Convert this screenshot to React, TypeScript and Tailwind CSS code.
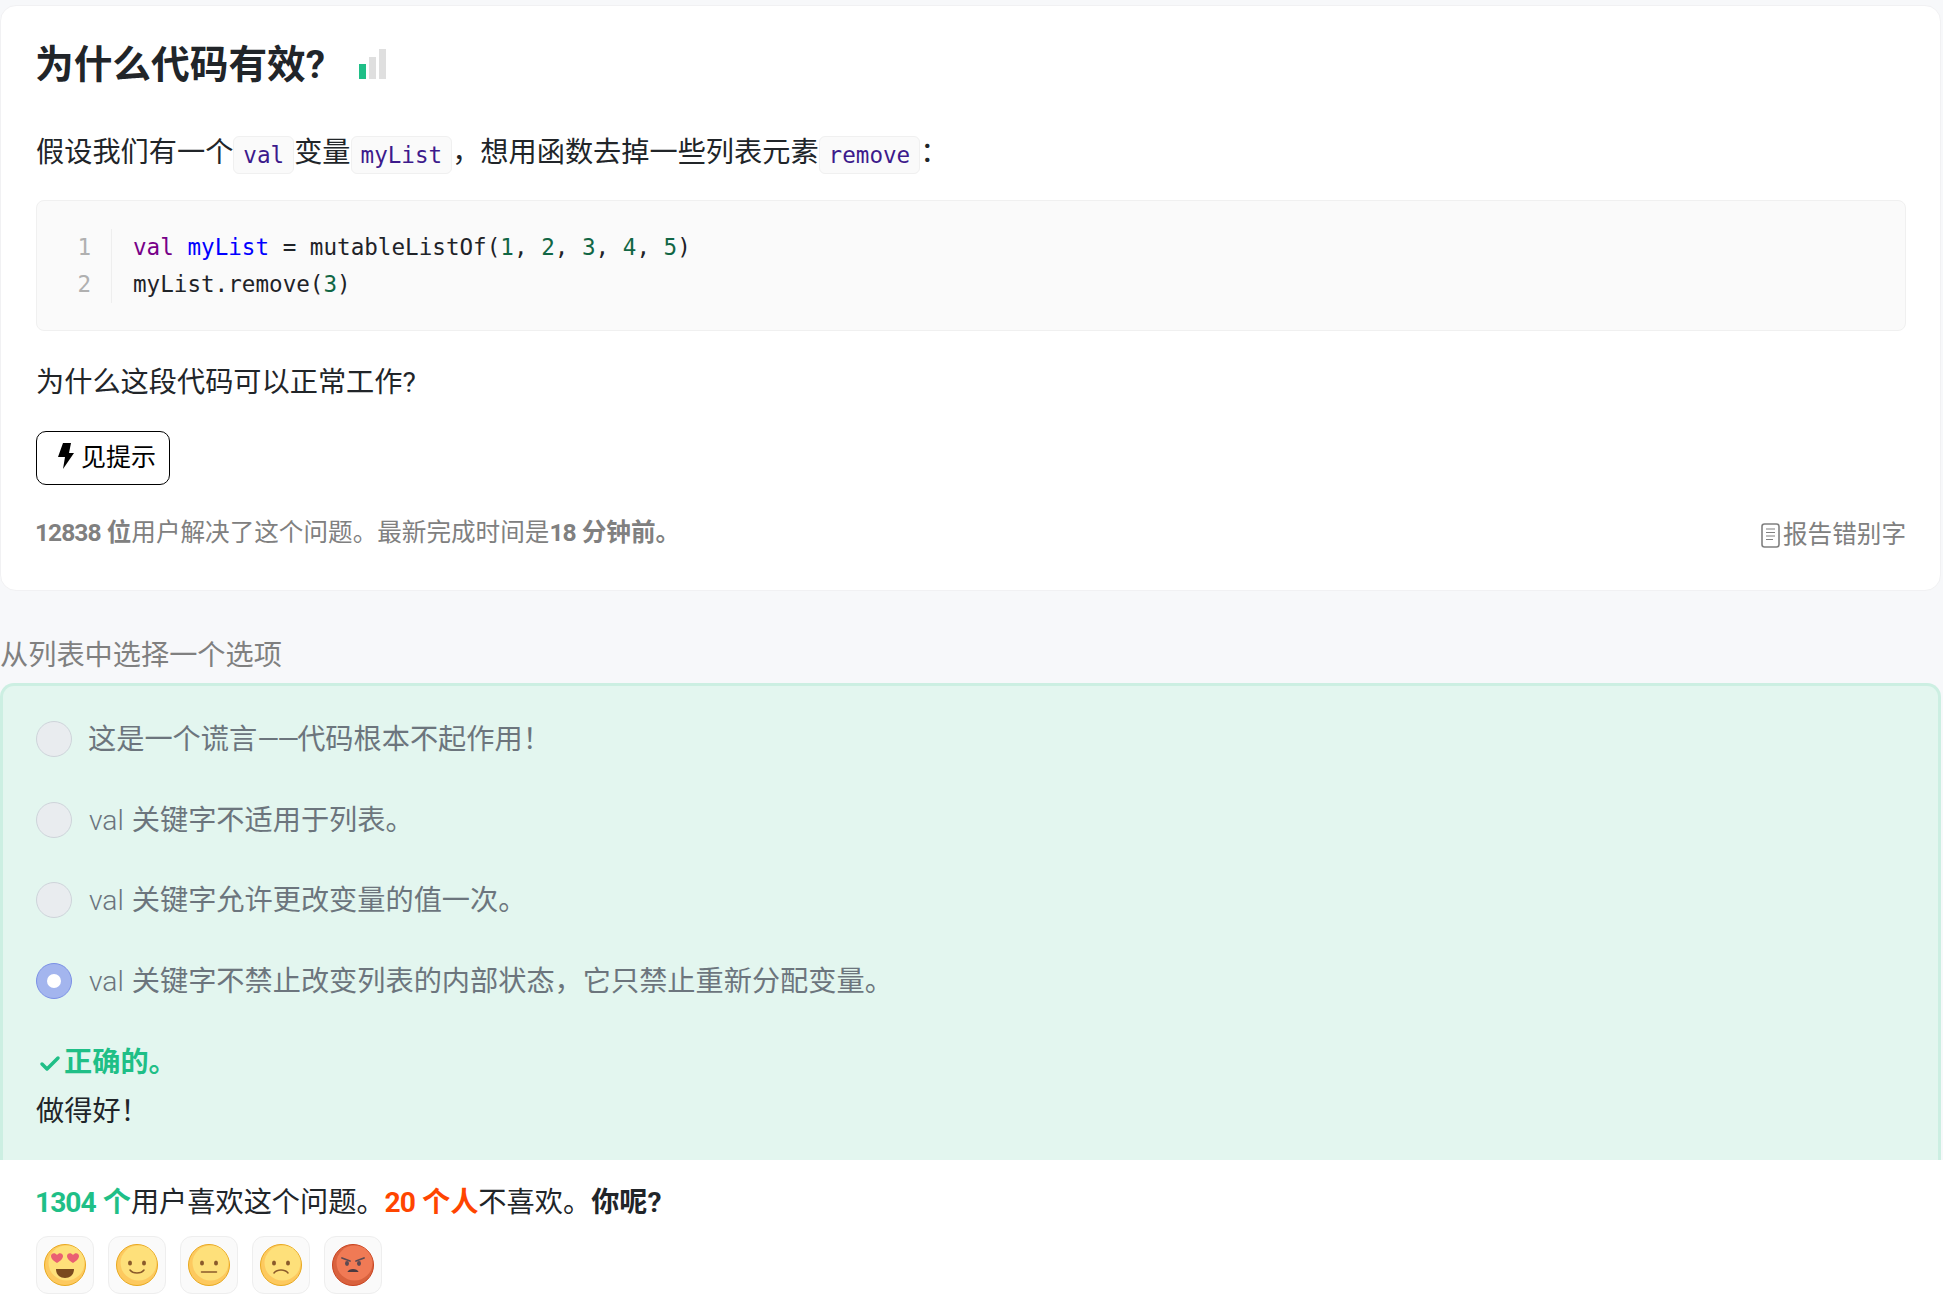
import { Check } from "lucide-react";

const sans = "font-['Roboto','Noto_Sans_CJK_SC',sans-serif]";
const mono = "font-['DejaVu_Sans_Mono','Noto_Sans_CJK_SC',monospace]";

const Code = ({ children }: { children: string }) => (
  <code className={`${mono} text-[22.6px] leading-[36px] text-[#3d1a8c] bg-[#fafafa] border border-[#f0f0f0] rounded-[6px] px-[9px] inline-block h-[38px] align-middle`}>
    {children}
  </code>
);

const Bars = () => (
  <svg width="29" height="30" viewBox="0 0 29 30" className="-mt-[2px]">
    <rect x="0" y="15" width="7" height="15" fill="#1fbf87" />
    <rect x="10" y="8" width="7" height="22" fill="#dfdfdf" />
    <rect x="20" y="0" width="7" height="30" fill="#dfdfdf" />
  </svg>
);

const Bolt = () => (
  <svg width="16" height="26" viewBox="0 0 16 26" fill="#000" className="-mt-[4px]">
    <path d="M5 0h8l-2 10h5L5 26l2-12H0z" />
  </svg>
);

const DocIcon = () => (
  <svg width="19" height="25" viewBox="0 0 19 25" fill="none" stroke="#808080" className="mr-[3px]">
    <rect x="1" y="1" width="17" height="23" rx="2.5" strokeWidth="1.6" />
    <path d="M5 6h9M5 9.5h9M5 13h9M5 16.5h7" strokeWidth="1.2" />
  </svg>
);

const Option = ({ children, val, selected }: { children: React.ReactNode; val?: boolean; selected?: boolean }) => (
  <div className="flex items-center h-[36px] gap-4">
    {selected ? (
      <span className="w-[36px] h-[36px] rounded-full bg-[#a3b5ee] border border-[#7b90e6] flex items-center justify-center">
        <span className="w-[14px] h-[14px] rounded-full bg-white" />
      </span>
    ) : (
      <span className="w-[36px] h-[36px] rounded-full bg-[#e9ecef] border border-[#ced4da]" />
    )}
    <span className="text-[28.2px] leading-[36px] text-[#6c757d] pt-[2px]">
      {val && <span className="font-light ml-[1px] mr-[8px]">val</span>}
      {children}
    </span>
  </div>
);

const Face = ({ mood }: { mood: "love" | "smile" | "flat" | "sad" | "angry" }) => {
  const angry = mood === "angry";
  const eye = "#8a5a2b";
  return (
    <div className="w-[58px] h-[58px] rounded-[12px] bg-[#fafafa] border border-[#eeeeee] flex items-center justify-center">
      <svg width="42" height="42" viewBox="0 0 42 42">
        <circle cx="21" cy="21" r="20.5" fill={angry ? "#d9623e" : "#fdc95f"} stroke={angry ? "#c9431f" : "#e8a91f"} strokeWidth="1" />
        <ellipse cx="22.5" cy="19" rx="18" ry="17.5" fill={angry ? "#f07a55" : "#fee07a"} />
        {mood === "love" && (
          <>
            <path d="M13 19c-3-2-6-4-6-7 0-3 4-4 6-1 2-3 6-2 6 1 0 3-3 5-6 7z" fill="#ea5f72" />
            <path d="M29 19c-3-2-6-4-6-7 0-3 4-4 6-1 2-3 6-2 6 1 0 3-3 5-6 7z" fill="#ea5f72" />
            <path d="M12 25h18c0 6-4 9-9 9s-9-3-9-9z" fill="#7a4a1e" />
          </>
        )}
        {(mood === "smile" || mood === "flat" || mood === "sad") && (
          <>
            <ellipse cx="14" cy="19" rx="2" ry="2.6" fill={eye} />
            <ellipse cx="28" cy="19" rx="2" ry="2.6" fill={eye} />
          </>
        )}
        {mood === "smile" && <path d="M14 26c3 4 11 4 14 0" fill="none" stroke={eye} strokeWidth="1.5" strokeLinecap="round" />}
        {mood === "flat" && <path d="M13.5 28h15" stroke={eye} strokeWidth="1.5" strokeLinecap="round" />}
        {mood === "sad" && <path d="M14 29c3-4 11-4 14 0" fill="none" stroke={eye} strokeWidth="1.5" strokeLinecap="round" />}
        {angry && (
          <>
            <path d="M10 14l8 3M32 14l-8 3" stroke="#5c4a52" strokeWidth="1.8" strokeLinecap="round" />
            <ellipse cx="15" cy="19.5" rx="2" ry="2.4" fill="#5c4a52" />
            <ellipse cx="27" cy="19.5" rx="2" ry="2.4" fill="#5c4a52" />
            <path d="M15.5 28c1-4 10-4 11 0z" fill="#4a3a40" />
          </>
        )}
      </svg>
    </div>
  );
};

export default function App() {
  return (
    <div className={`${sans} w-[1943px] h-[1302px] overflow-hidden bg-[#f7f8fa] text-[#212529] pt-[5px]`}>
      <div className="w-[1941px] h-[586px] bg-white rounded-[16px] border border-[#f1f1f3] pl-[34px] pr-[34px] pt-[35px]">
        <div className="flex items-center gap-[34px] h-[48px]">
          <h1 className="text-[38.7px] leading-[48px] font-bold">为什么代码有效?</h1>
          <Bars />
        </div>
        <p className="mt-[44px] ml-[1px] h-[40px] text-[28.2px] leading-[40px] whitespace-nowrap">
          假设我们有一个<Code>val</Code>变量<Code>myList</Code>，想用函数去掉一些列表元素<Code>remove</Code>：
        </p>
        <div className={`${mono} mt-[27px] ml-[1px] h-[131px] w-[1870px] bg-[#fafafa] border border-[#f0f0f0] rounded-[8px] py-[28px] pl-[39px] flex text-[22.6px] leading-[37px]`}>
          <div className="w-[36px] pr-[20px] border-r border-[#eeeeee] text-[#b0b0b0] text-right h-[74px]">
            <div>1</div>
            <div>2</div>
          </div>
          <div className="pl-[21px] text-[#1f2328] whitespace-nowrap">
            <div>
              <span className="text-[#770088]">val</span> <span className="text-[#0000ff]">myList</span> = mutableListOf(
              <span className="text-[#116644]">1</span>, <span className="text-[#116644]">2</span>, <span className="text-[#116644]">3</span>,{" "}
              <span className="text-[#116644]">4</span>, <span className="text-[#116644]">5</span>)
            </div>
            <div>
              myList.remove(<span className="text-[#116644]">3</span>)
            </div>
          </div>
        </div>
        <p className="mt-[32px] ml-[1px] text-[28.2px] leading-[40px]">为什么这段代码可以正常工作?</p>
        <button className="mt-[28px] ml-[1px] w-[134px] h-[54px] rounded-[10px] border border-black bg-white text-black text-[25px] flex items-center justify-start pl-[21px] gap-[7px]">
          <Bolt />
          见提示
        </button>
        <div className="mt-[26px] flex justify-between items-center text-[24.6px] leading-[40px] text-[#808080]">
          <div>
            <b>
              <span className="tracking-[-1px]">12838</span> 位
            </b>
            用户解决了这个问题。最新完成时间是
            <b>
              <span className="tracking-[-1px]">18</span> 分钟前。
            </b>
          </div>
          <div className="flex items-center pt-[4px]">
            <DocIcon />
            报告错别字
          </div>
        </div>
      </div>
      <div className="mt-[45px] h-[40px] text-[28.2px] leading-[40px] text-[#808080]">从列表中选择一个选项</div>
      <div className="mt-[7px] w-[1941px] h-[477px] bg-[#e3f6ef] border-[3px] border-b-0 border-[#ccefe2] rounded-t-[14px] pl-[33px] pt-[35px]">
        <div className="flex flex-col gap-[44.5px]">
          <Option>
            这是一个谎言<span className="tracking-[-2px]">——</span>代码根本不起作用！
          </Option>
          <Option val>关键字不适用于列表。</Option>
          <Option val>关键字允许更改变量的值一次。</Option>
          <Option val selected>
            关键字不禁止改变列表的内部状态，它只禁止重新分配变量。
          </Option>
        </div>
        <div className="mt-[45px] flex items-center h-[40px] text-[#1fbf87] text-[28.2px] font-bold">
          <Check size={24} strokeWidth={3.5} className="ml-[2px] mr-[2px]" />
          正确的。
        </div>
        <div className="mt-[8px] text-[28.2px] leading-[40px]">做得好！</div>
      </div>
      <div className="h-[160px] bg-white pl-[35px] pt-[23px]">
        <div className="text-[28.2px] leading-[40px] h-[40px]">
          <b className="text-[#1fbf87]">
            <span className="tracking-[-1px]">1304</span> 个
          </b>
          用户喜欢这个问题。
          <b className="text-[#ff4500]">
            <span className="tracking-[-1px]">20</span> 个人
          </b>
          不喜欢。<b>你呢?</b>
        </div>
        <div className="mt-[13px] ml-[1px] flex gap-[14px]">
          <Face mood="love" />
          <Face mood="smile" />
          <Face mood="flat" />
          <Face mood="sad" />
          <Face mood="angry" />
        </div>
      </div>
    </div>
  );
}
